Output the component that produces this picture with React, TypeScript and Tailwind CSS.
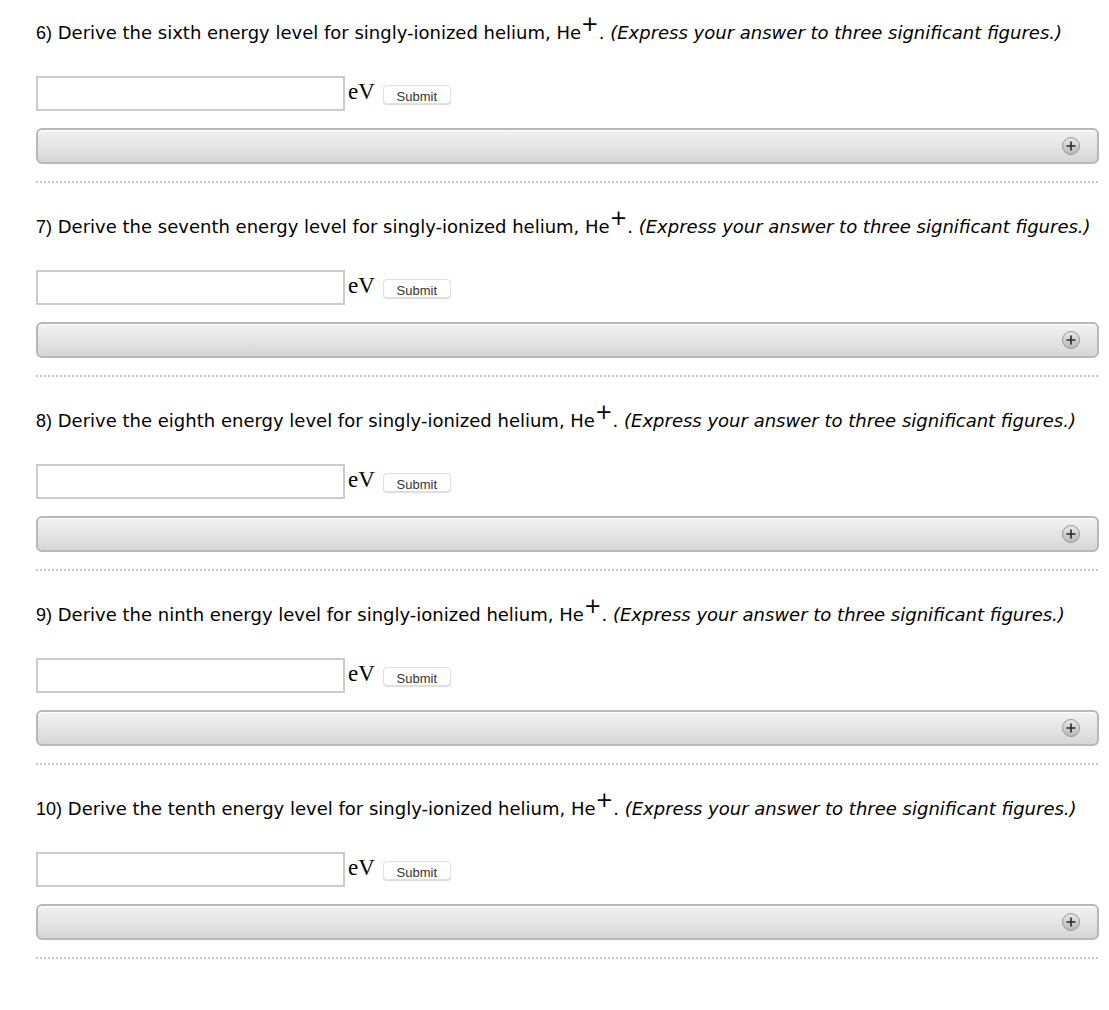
import React from "react";

const items = [
  { n: "6", word: "sixth" },
  { n: "7", word: "seventh" },
  { n: "8", word: "eighth" },
  { n: "9", word: "ninth" },
  { n: "10", word: "tenth" },
];

function PlusIcon() {
  return (
    <svg width="20" height="20" viewBox="0 0 20 20">
      <defs>
        <linearGradient id="pg" x1="0" y1="0" x2="0" y2="1">
          <stop offset="0" stopColor="#e8e8e8" />
          <stop offset="1" stopColor="#b8b8b8" />
        </linearGradient>
      </defs>
      <circle cx="10" cy="10" r="8.5" fill="url(#pg)" stroke="#999999" strokeWidth="1" />
      <path d="M10 5.5v9M5.5 10h9" stroke="#2a2a2a" strokeWidth="1.6" />
    </svg>
  );
}

function Block({ n, word, first }: { n: string; word: string; first: boolean }) {
  return (
    <div className={first ? "" : "pt-[32px]"}>
      <div className="h-[24px] leading-[24px] text-[18px] text-black whitespace-nowrap [font-family:'DejaVu_Sans',sans-serif]">
        <span className="[font-family:'Liberation_Sans',sans-serif] text-[18px]">{n})</span>{" "}
        Derive the {word} energy level for singly-ionized helium, He
        <span className="inline-block text-[21px] leading-none relative top-[-8px]">+</span>.{" "}
        <i>(Express your answer to three significant figures.)</i>
      </div>
      <div className="mt-[31px] flex items-start h-[35px]">
        <div className="w-[309px] h-[35px] border-2 border-[#cbcbcb] bg-white" />
        <span className="ml-[3px] mt-[2px] text-[23px] leading-[28px] [font-family:'Liberation_Serif',serif] text-black">eV</span>
        <button className="ml-[8px] mt-[9px] w-[68px] h-[19px] rounded-[4px] border border-[#e0e0e0] bg-white shadow-[0_1px_1px_rgba(0,0,0,0.15)] text-[13px] leading-[17px] pt-[2px] text-[#333] [font-family:'Liberation_Sans',sans-serif]">
          Submit
        </button>
      </div>
      <div className="mt-[17px] h-[36px] rounded-[6px] border-2 border-[#b8b8b8] bg-[linear-gradient(to_bottom,#f3f3f3,#d6d6d6)] shadow-[inset_0_1px_0_#ffffff] flex items-center justify-end pr-[16px]">
        <PlusIcon />
      </div>
      <div className="mt-[17px] h-[2px] bg-[repeating-linear-gradient(to_right,#c8c8c8_0px,#c8c8c8_2px,transparent_2px,transparent_4px)]" />
    </div>
  );
}

export default function App() {
  return (
    <div className="w-[1109px] h-[1010px] bg-white pl-[36px] pr-[10px] pt-[21px]">
      {items.map((it, i) => (
        <Block key={it.n} n={it.n} word={it.word} first={i === 0} />
      ))}
    </div>
  );
}
